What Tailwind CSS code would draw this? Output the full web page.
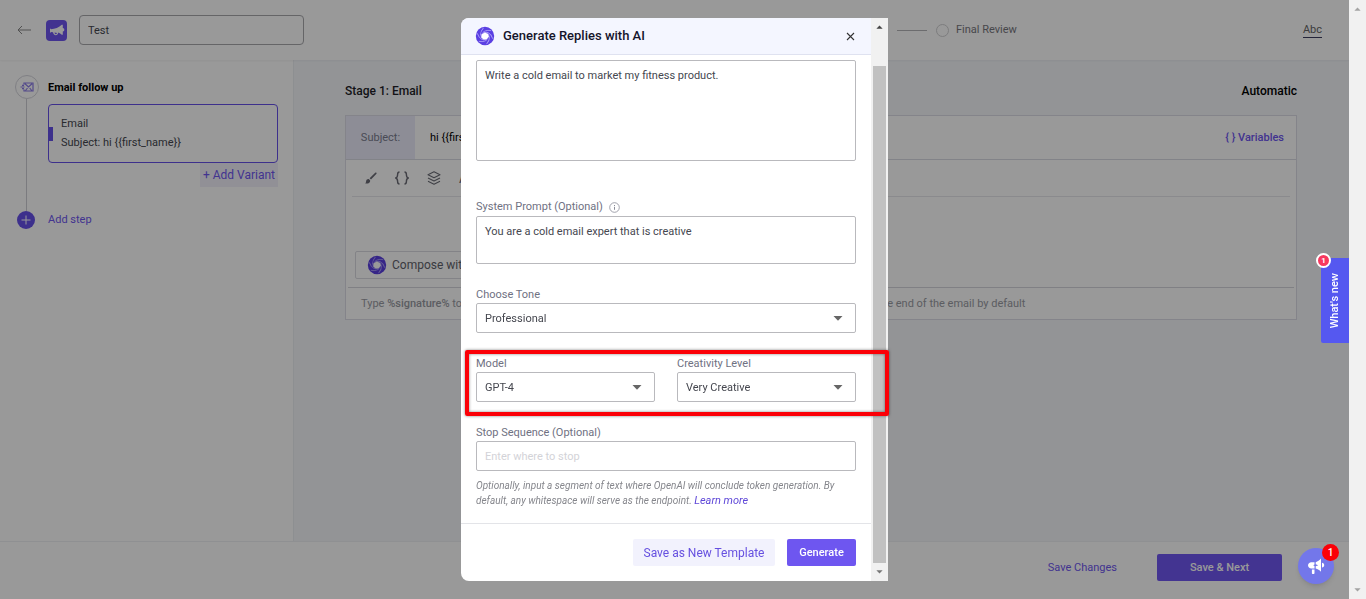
<!DOCTYPE html>
<html lang="en">
<head>
    <meta charset="UTF-8">
    <meta name="viewport" content="width=device-width, initial-scale=1.0">
    <script src="https://cdn.jsdelivr.net/npm/@tailwindcss/browser@4"></script>
    <title>Generate Replies with AI</title>
    <style>
        * {
            font-family: 'Roboto', 'Liberation Sans', sans-serif;
        }
    </style>
</head>
<body class="h-screen flex overflow-hidden bg-white text-[11px] leading-4 text-[#45474f]">
    <!-- Shared icons -->
    <svg class="hidden">
        <symbol id="swirl" viewBox="0 0 20 20">
            <circle cx="10" cy="10" r="9.200" fill="#5a3fe2"/>
            <g fill="none" stroke="#a99cf7" stroke-width="0.9" stroke-linecap="round">
                <path id="blade" d="M6.800 10C6.500 6.200 10 3.500 15.800 4.600"/>
                <use href="#blade" transform="rotate(60 10 10)"/>
                <use href="#blade" transform="rotate(120 10 10)"/>
                <use href="#blade" transform="rotate(180 10 10)"/>
                <use href="#blade" transform="rotate(240 10 10)"/>
                <use href="#blade" transform="rotate(300 10 10)"/>
            </g>
            <path d="M10 6.500l2.900 1.500 1 2.600-2.200 2.700-3 .3-2.400-2.200.3-3.200z" fill="#fff"/>
        </symbol>
        <symbol id="caret" viewBox="0 0 10 5">
            <path d="M0.500 0h9L5 4.800z" fill="currentColor"/>
        </symbol>
    </svg>

    <div class="flex-1 min-w-0 flex flex-col">
        <!-- Top bar -->
        <header class="h-15 shrink-0 flex items-center pl-4 pr-[27px] bg-white shadow-xs z-10">
            <button aria-label="Back" class="w-4">
                <svg class="w-4 h-3" viewBox="0 0 16 12" fill="none" stroke="#888" stroke-width="1"><path d="M15 6H2M6 2L2 6l4 4"/></svg>
            </button>
            <div class="ml-[14px] size-[21px] rounded-sm bg-[#6e56f0] flex items-center justify-center">
                <svg class="size-4" viewBox="0 0 16 16" fill="#fff"><path d="M1 6.700h1v.6C6 7 10 5.500 12.800 2.800h1v3.300c1 .1 1.500.8 1.500 1.700s-.5 1.600-1.500 1.700v3.300h-1c-1-.9-2.200-1.600-3.500-2.200-.2 1.600-1.200 2.600-2.500 2.600S4.300 12.300 4 10.300L2 10v.5H1z"/><path d="M5.500 10.500l2.600.6c-.2.700-.6 1.100-1.200 1.100-.7 0-1.200-.6-1.400-1.700z" fill="#6e56f0"/></svg>
            </div>
            <input type="text" aria-label="Sequence name" value="Test" class="ml-3 w-[225px] h-[30px] px-2 border border-[#a8a8ac] rounded-sm">
            <div class="flex-1 flex items-center justify-end pr-[286px] text-[#77777e]">
                <span class="w-[30px] h-px bg-[#b5b5b8]"></span>
                <span class="ml-[9px] mr-[7px] size-[13px] rounded-full border border-[#d0d0d2]"></span>
                <span>Final Review</span>
            </div>
            <button class="border-b border-[#3c3c60] leading-[14px] text-[#666]">Abc</button>
        </header>

        <div class="flex-1 min-h-0 flex">
            <!-- Steps -->
            <aside class="w-[294px] shrink-0 px-[15px] pt-[15px] bg-white border-r border-[#eceef2] flex">
                <div class="w-[33px] flex flex-col items-start">
                    <div class="size-6 rounded-full border border-[#d5d5dc] flex items-center justify-center">
                        <svg class="w-[14px] h-[10px]" viewBox="0 0 14 10" fill="none" stroke="#8b7be8" stroke-width="1.200"><path d="M4 2.500V1h9v8H4V7.500M5 1.800L8.500 5 12 1.800M5.500 8.500l2-2.500M11.700 8.500l-2-2.500M0.500 5h4M2 3.300h2M2 6.700h2"/></svg>
                    </div>
                    <div class="ml-[11px] w-px h-28 bg-[#cdcdd4]"></div>
                    <button aria-label="Add step" class="ml-0.5 size-[18px] rounded-full bg-[#6650ea] flex items-center justify-center">
                        <svg class="size-[10px]" viewBox="0 0 10 10" stroke="#fff" stroke-width="1"><path d="M5 .5v9M.5 5h9"/></svg>
                    </button>
                </div>
                <div class="flex-1 flex flex-col items-start">
                    <h2 class="h-[29px] pt-[5px] font-bold text-black">Email follow up</h2>
                    <div class="w-full h-[59px] flex items-center border border-[#6650ea] rounded-sm">
                        <span class="w-1 h-[14px] bg-[#6650ea]"></span>
                        <div class="pl-2 pb-0.5 leading-[19px]">
                            <p>Email</p>
                            <p>Subject: hi {{first_name}}</p>
                        </div>
                    </div>
                    <button class="self-end w-[78px] h-6 bg-[#f2f1fb] text-[12px] text-[#6e56f0]">+ Add Variant</button>
                    <button class="mt-[25px] text-[#6e56f0]">Add step</button>
                </div>
            </aside>

            <!-- Email editor -->
            <main class="flex-1 min-w-0 bg-[#f5f7fb] pl-[51px] pr-13 pt-[23px]">
                <div class="flex justify-between text-[12px] font-medium text-[#1e1e28]">
                    <h1>Stage 1: Email</h1>
                    <span class="text-black">Automatic</span>
                </div>
                <section class="mt-4 h-[205px] flex flex-col border border-[#dcdde6] bg-white">
                    <div class="h-11 shrink-0 flex items-center border-b border-[#d9dae3]">
                        <div class="w-[69px] h-full flex items-center justify-center bg-[#ebecfb] text-[#7a7c8e]">Subject:</div>
                        <span class="flex-1 pl-[15px] text-black">hi {{first_name}}</span>
                        <button class="pr-3 font-medium text-[#6e56f0]">{ } Variables</button>
                    </div>
                    <div class="mx-[6px] h-[37px] shrink-0 flex items-center gap-[18px] pl-3 border-b border-[#e6e7ec] text-[#6b6c76]">
                        <svg class="size-[13px]" viewBox="0 0 13 13" fill="currentColor"><path d="M12.400.7c.4.400.300.900-.1 1.400L7 7.600 5.600 6.200 11.200.800c.5-.4.900-.4 1.200-.1zM4.800 7l1.400 1.400c.1 1.900-1.400 3.500-5 3.100.8-.6.7-1.200.9-2.300.2-1.500 1.300-2.400 2.700-2.200z"/></svg>
                        <svg class="size-[14px]" viewBox="0 0 14 14" fill="none" stroke="currentColor" stroke-width="1.400"><path d="M4.500 1C3 1 2.600 1.500 2.600 3.500S2.400 6.500 .8 7c1.600.5 1.800 1.500 1.800 3.500S3 13 4.500 13M9.500 1c1.500 0 1.900.5 1.900 2.500s.2 3 1.800 3.500c-1.600.5-1.800 1.500-1.800 3.500S11 13 9.500 13"/></svg>
                        <svg class="size-[14px]" viewBox="0 0 14 14" fill="none" stroke="currentColor" stroke-width="1.100" stroke-linejoin="round"><path d="M7 .7l6 3-6 3-6-3zM1 7l6 3 6-3M1 10.200l6 3 6-3"/></svg>
                        <span class="text-[14px]">A</span>
                    </div>
                    <div class="flex-1 pl-[9px] flex items-end pb-2">
                        <button class="w-[150px] h-7 flex items-center gap-[5px] pl-[11px] border border-[#dadbe2] rounded-xs text-[12px] text-[#62636c]">
                            <svg class="size-5"><use href="#swirl"/></svg>Compose with AI
                        </button>
                    </div>
                    <p class="mx-0.5 h-8 shrink-0 flex items-center border-t border-[#d5d6dc] pl-[13px] text-[#999ba3]">
                        <span>Type <b class="font-medium">%signature%</b> to position the signature anywhere, otherwise the signature is automatically inserted at the end of the email by default</span>
                    </p>
                </section>
            </main>
        </div>

        <!-- Bottom bar -->
        <footer class="h-[58px] shrink-0 flex items-center justify-end pr-[67px] pb-[6px] bg-white border-t border-[#eff0f4]">
            <button class="text-[#6e56f0]">Save Changes</button>
            <button class="ml-10 w-[125px] h-[27px] rounded-xs bg-[#7058f2] font-medium text-white">Save &amp; Next</button>
        </footer>
    </div>

    <!-- Page scrollbar -->
    <div class="w-[17px] shrink-0 flex flex-col items-center justify-between py-[7px] bg-[#f1f1f1] text-[#a3a3a3] z-40">
        <svg class="w-[7px] h-1 rotate-180"><use href="#caret"/></svg>
        <svg class="w-[7px] h-1"><use href="#caret"/></svg>
    </div>

    <!-- Modal -->
    <div class="fixed inset-y-0 left-0 right-[17px] z-20 bg-black/40 flex items-center justify-center">
        <div role="dialog" aria-labelledby="dialog-title" class="w-[427px] flex rounded-l-lg overflow-hidden bg-white">
            <div class="flex-1">
                <div class="h-[37px] flex items-center pl-[14px] pr-4 bg-[#f4f6ff] border-b border-[#dfe2f0]">
                    <svg class="size-5"><use href="#swirl"/></svg>
                    <h2 id="dialog-title" class="flex-1 ml-2 text-[13px] font-medium text-[#14142b]">Generate Replies with AI</h2>
                    <button aria-label="Close">
                        <svg class="size-[9px]" viewBox="0 0 9 9" stroke="#333" stroke-width="1.100"><path d="M1 1l7 7M8 1L1 8"/></svg>
                    </button>
                </div>

                <form class="px-[15px] pt-[5px] pb-[15px] flex flex-col">
                    <textarea aria-label="Prompt" class="h-[101px] px-2 py-[7px] border border-[#b9b9bd] rounded-xs resize-none">Write a cold email to market my fitness product.</textarea>

                    <div class="mt-[38px] mb-px flex items-center gap-[6px] text-[#6f7182]">
                        <label for="system">System Prompt (Optional)</label>
                        <svg class="size-[11px]" viewBox="0 0 11 11" fill="none" stroke="#8a8c98"><circle cx="5.500" cy="5.500" r="4.800" stroke-width=".8"/><path d="M5.500 4.800v3M5.500 3v1"/></svg>
                    </div>
                    <textarea id="system" class="h-12 px-2 py-[7px] border border-[#b9b9bd] rounded-xs resize-none">You are a cold email expert that is creative</textarea>

                    <label for="tone" class="mt-[23px] text-[#6f7182]">Choose Tone</label>
                    <div class="relative">
                        <select id="tone" class="w-full h-[30px] px-2 pt-0.5 appearance-none border border-[#b9b9bd] rounded-xs"><option>Professional</option></select>
                        <svg class="absolute right-[13px] top-[13px] w-[10px] h-[5px] text-[#666] pointer-events-none"><use href="#caret"/></svg>
                    </div>

                    <div class="mt-[23px] grid grid-cols-2 gap-[22px]">
                        <div class="flex flex-col">
                            <label for="model" class="text-[#6f7182]">Model</label>
                            <div class="relative">
                                <select id="model" class="w-full h-[30px] px-2 pt-0.5 appearance-none border border-[#b9b9bd] rounded-xs"><option>GPT-4</option></select>
                                <svg class="absolute right-[13px] top-[13px] w-[10px] h-[5px] text-[#666] pointer-events-none"><use href="#caret"/></svg>
                            </div>
                        </div>
                        <div class="flex flex-col">
                            <label for="creativity" class="text-[#6f7182]">Creativity Level</label>
                            <div class="relative">
                                <select id="creativity" class="w-full h-[30px] px-2 pt-0.5 appearance-none border border-[#b9b9bd] rounded-xs"><option>Very Creative</option></select>
                                <svg class="absolute right-[13px] top-[13px] w-[10px] h-[5px] text-[#666] pointer-events-none"><use href="#caret"/></svg>
                            </div>
                        </div>
                    </div>

                    <label for="stop" class="mt-[23px] text-[#6f7182]">Stop Sequence (Optional)</label>
                    <input id="stop" type="text" placeholder="Enter where to stop" class="h-[30px] px-2 border border-[#b9b9bd] rounded-xs placeholder:text-[#d3d3d8]">
                    <p class="mt-[7px] text-[10px] leading-[15px] italic text-[#85868c]">Optionally, input a segment of text where OpenAI will conclude token generation. By default, any whitespace will serve as the endpoint. <a href="#" class="text-[11px] text-[#5f48d8]">Learn more</a></p>
                </form>

                <div class="flex justify-end gap-3 py-[15px] pr-[15px] border-t border-[#e3e4e8]">
                    <button class="w-[142px] h-[27px] rounded-xs bg-[#f2f2fd] text-[12px] text-[#6650e0]">Save as New Template</button>
                    <button class="w-[69px] h-[27px] rounded-xs bg-[#6e56f0] font-medium text-white">Generate</button>
                </div>
            </div>

            <!-- Modal scrollbar -->
            <div class="w-[17px] flex flex-col items-center bg-[#f1f1f1]">
                <svg class="my-[7px] w-[7px] h-1 rotate-180 text-[#444]"><use href="#caret"/></svg>
                <div class="mt-[30px] w-[13px] flex-1 bg-[#c1c1c1]"></div>
                <svg class="my-[7px] w-[7px] h-1 text-[#777]"><use href="#caret"/></svg>
            </div>
        </div>
    </div>

    <!-- Highlight -->
    <div class="absolute left-[465px] top-[350px] w-[424px] h-[66px] z-30 border-4 border-[#fb0007] rounded-xs shadow-[0_0_3px_rgba(0,0,0,0.5),inset_0_0_3px_rgba(0,0,0,0.5)] pointer-events-none"></div>

    <!-- What's new tab -->
    <button class="fixed right-[17px] top-[258px] w-7 h-[85px] z-30 flex items-center justify-center rounded-l-xs bg-[#5558f0] text-white font-medium">
        <span class="[writing-mode:vertical-rl] rotate-180">What's new</span>
        <span class="absolute -left-[5px] -top-[5px] size-[15px] flex items-center justify-center rounded-full border-2 border-white bg-[#f8385f] text-[8px] leading-none font-bold">1</span>
    </button>

    <!-- Chat launcher -->
    <button aria-label="Announcements" class="fixed right-8 top-[548px] size-9 z-30 flex items-center justify-center rounded-full bg-[#7377ea] shadow-md text-white">
        <svg class="size-[18px]" viewBox="0 0 18 18" fill="#fff"><path d="M14 1.500v13.200c-1.500-1.600-3.300-2.700-5.300-3.200V9.200l2.600-1-2.600-1V5.200C10.700 4.500 12.500 3.200 14 1.500zM7.500 5.200v2.200l-1.300.8 1.300.8v2.500H4.300C2.500 11.500 1 10 1 8.300s1.500-3.100 3.300-3.100zM15 5.800c1.400.3 2.200 1.200 2.200 2.400s-.8 2.100-2.200 2.400zM4.900 12.500h2.600V16c0 .6-.4 1-1 1h-.6c-.6 0-1-.4-1-1z"/></svg>
        <span class="absolute left-6 -top-1 size-[17px] flex items-center justify-center rounded-full bg-[#fb0007] text-[10px] font-medium">1</span>
    </button>
</body>
</html>
